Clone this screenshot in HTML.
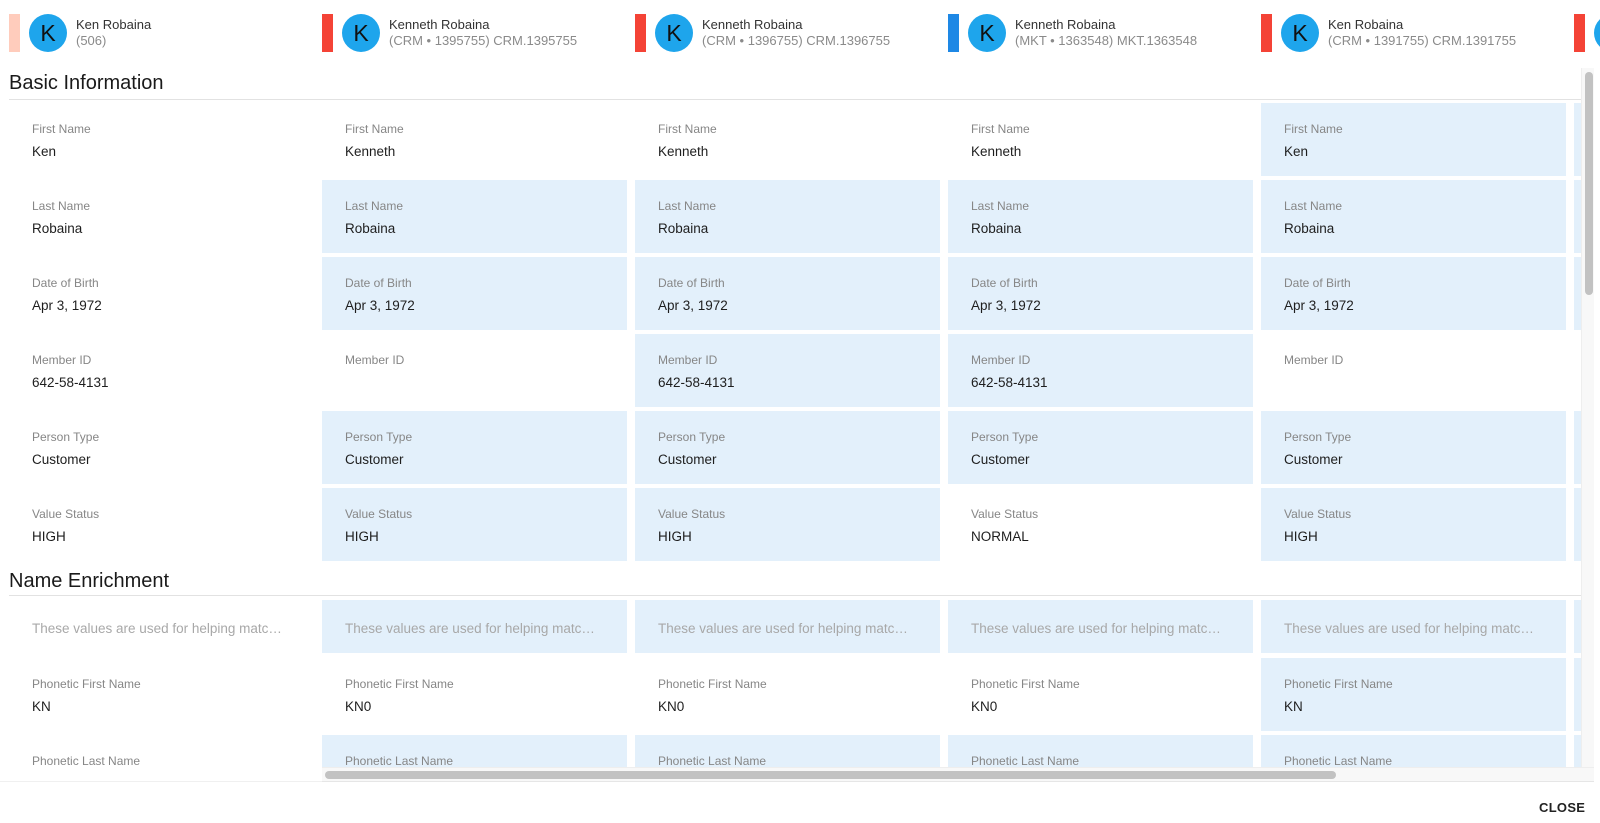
<!DOCTYPE html>
<html><head><meta charset="utf-8"><style>
*{margin:0;padding:0;box-sizing:border-box}
body{width:1600px;height:823px;background:#fff;font-family:"Liberation Sans",Arial,sans-serif;position:relative;overflow:hidden;color:#212121}
.a{position:absolute}
.bar{position:absolute;top:14px;width:11px;height:38px}
.av{position:absolute;top:14px;width:38px;height:38px;border-radius:50%;background:#1ea5ec;color:#111;font-size:23px;line-height:38px;text-align:center}
.nm{position:absolute;top:17px;font-size:13px;line-height:16px;color:#333;white-space:nowrap}
.sb{position:absolute;top:33px;font-size:13px;line-height:16px;color:#8a8a8a;white-space:nowrap}
.clip{position:absolute;left:0;top:62px;width:1581px;height:705px;overflow:hidden}
.in{position:absolute;left:0;top:-62px;width:1600px;height:823px}
.h{position:absolute;left:9px;font-size:20px;color:#1a1a1a;line-height:22px}
.ln{position:absolute;left:9px;width:1580px;height:1px;background:#e2e2e2}
.c{position:absolute;width:305px;height:73px}
.hl{background:#e3f0fb}
.c .l{position:absolute;left:23px;top:19px;font-size:12px;color:#868686;line-height:15px;white-space:nowrap}
.c .v{position:absolute;left:23px;top:40px;font-size:13.5px;color:#1e1e1e;line-height:18px;white-space:nowrap}
.d{position:absolute;width:305px;height:53px}
.d span{position:absolute;left:23px;top:20px;font-size:13.5px;color:#a8a8a8;line-height:18px;white-space:nowrap}
</style></head><body>

<div class="bar" style="left:9px;background:#ffccbc"></div><div class="av" style="left:29px">K</div><div class="nm" style="left:76px">Ken Robaina</div><div class="sb" style="left:76px">(506)</div>
<div class="bar" style="left:322px;background:#f44336"></div><div class="av" style="left:342px">K</div><div class="nm" style="left:389px">Kenneth Robaina</div><div class="sb" style="left:389px">(CRM • 1395755) CRM.1395755</div>
<div class="bar" style="left:635px;background:#f44336"></div><div class="av" style="left:655px">K</div><div class="nm" style="left:702px">Kenneth Robaina</div><div class="sb" style="left:702px">(CRM • 1396755) CRM.1396755</div>
<div class="bar" style="left:948px;background:#1e88e5"></div><div class="av" style="left:968px">K</div><div class="nm" style="left:1015px">Kenneth Robaina</div><div class="sb" style="left:1015px">(MKT • 1363548) MKT.1363548</div>
<div class="bar" style="left:1261px;background:#f44336"></div><div class="av" style="left:1281px">K</div><div class="nm" style="left:1328px">Ken Robaina</div><div class="sb" style="left:1328px">(CRM • 1391755) CRM.1391755</div>
<div class="bar" style="left:1574px;background:#f44336"></div><div class="av" style="left:1594px">K</div>

<div class="clip"><div class="in">
<div class="h" style="top:72px">Basic Information</div><div class="ln" style="top:99px"></div>

<div class="c" style="left:9px;top:103px"><div class="l">First Name</div><div class="v">Ken</div></div>
<div class="c" style="left:322px;top:103px"><div class="l">First Name</div><div class="v">Kenneth</div></div>
<div class="c" style="left:635px;top:103px"><div class="l">First Name</div><div class="v">Kenneth</div></div>
<div class="c" style="left:948px;top:103px"><div class="l">First Name</div><div class="v">Kenneth</div></div>
<div class="c hl" style="left:1261px;top:103px"><div class="l">First Name</div><div class="v">Ken</div></div>
<div class="c hl" style="left:1574px;top:103px"></div>

<div class="c" style="left:9px;top:180px"><div class="l">Last Name</div><div class="v">Robaina</div></div>
<div class="c hl" style="left:322px;top:180px"><div class="l">Last Name</div><div class="v">Robaina</div></div>
<div class="c hl" style="left:635px;top:180px"><div class="l">Last Name</div><div class="v">Robaina</div></div>
<div class="c hl" style="left:948px;top:180px"><div class="l">Last Name</div><div class="v">Robaina</div></div>
<div class="c hl" style="left:1261px;top:180px"><div class="l">Last Name</div><div class="v">Robaina</div></div>
<div class="c hl" style="left:1574px;top:180px"></div>

<div class="c" style="left:9px;top:257px"><div class="l">Date of Birth</div><div class="v">Apr 3, 1972</div></div>
<div class="c hl" style="left:322px;top:257px"><div class="l">Date of Birth</div><div class="v">Apr 3, 1972</div></div>
<div class="c hl" style="left:635px;top:257px"><div class="l">Date of Birth</div><div class="v">Apr 3, 1972</div></div>
<div class="c hl" style="left:948px;top:257px"><div class="l">Date of Birth</div><div class="v">Apr 3, 1972</div></div>
<div class="c hl" style="left:1261px;top:257px"><div class="l">Date of Birth</div><div class="v">Apr 3, 1972</div></div>
<div class="c hl" style="left:1574px;top:257px"></div>

<div class="c" style="left:9px;top:334px"><div class="l">Member ID</div><div class="v">642-58-4131</div></div>
<div class="c" style="left:322px;top:334px"><div class="l">Member ID</div></div>
<div class="c hl" style="left:635px;top:334px"><div class="l">Member ID</div><div class="v">642-58-4131</div></div>
<div class="c hl" style="left:948px;top:334px"><div class="l">Member ID</div><div class="v">642-58-4131</div></div>
<div class="c" style="left:1261px;top:334px"><div class="l">Member ID</div></div>

<div class="c" style="left:9px;top:411px"><div class="l">Person Type</div><div class="v">Customer</div></div>
<div class="c hl" style="left:322px;top:411px"><div class="l">Person Type</div><div class="v">Customer</div></div>
<div class="c hl" style="left:635px;top:411px"><div class="l">Person Type</div><div class="v">Customer</div></div>
<div class="c hl" style="left:948px;top:411px"><div class="l">Person Type</div><div class="v">Customer</div></div>
<div class="c hl" style="left:1261px;top:411px"><div class="l">Person Type</div><div class="v">Customer</div></div>
<div class="c hl" style="left:1574px;top:411px"></div>

<div class="c" style="left:9px;top:488px"><div class="l">Value Status</div><div class="v">HIGH</div></div>
<div class="c hl" style="left:322px;top:488px"><div class="l">Value Status</div><div class="v">HIGH</div></div>
<div class="c hl" style="left:635px;top:488px"><div class="l">Value Status</div><div class="v">HIGH</div></div>
<div class="c" style="left:948px;top:488px"><div class="l">Value Status</div><div class="v">NORMAL</div></div>
<div class="c hl" style="left:1261px;top:488px"><div class="l">Value Status</div><div class="v">HIGH</div></div>
<div class="c hl" style="left:1574px;top:488px"></div>

<div class="h" style="top:570px">Name Enrichment</div><div class="ln" style="top:595px"></div>

<div class="d" style="left:9px;top:600px"><span>These values are used for helping matc…</span></div>
<div class="d hl" style="left:322px;top:600px"><span>These values are used for helping matc…</span></div>
<div class="d hl" style="left:635px;top:600px"><span>These values are used for helping matc…</span></div>
<div class="d hl" style="left:948px;top:600px"><span>These values are used for helping matc…</span></div>
<div class="d hl" style="left:1261px;top:600px"><span>These values are used for helping matc…</span></div>
<div class="d hl" style="left:1574px;top:600px"></div>

<div class="c" style="left:9px;top:658px"><div class="l">Phonetic First Name</div><div class="v">KN</div></div>
<div class="c" style="left:322px;top:658px"><div class="l">Phonetic First Name</div><div class="v">KN0</div></div>
<div class="c" style="left:635px;top:658px"><div class="l">Phonetic First Name</div><div class="v">KN0</div></div>
<div class="c" style="left:948px;top:658px"><div class="l">Phonetic First Name</div><div class="v">KN0</div></div>
<div class="c hl" style="left:1261px;top:658px"><div class="l">Phonetic First Name</div><div class="v">KN</div></div>
<div class="c hl" style="left:1574px;top:658px"></div>

<div class="c" style="left:9px;top:735px"><div class="l">Phonetic Last Name</div></div>
<div class="c hl" style="left:322px;top:735px"><div class="l">Phonetic Last Name</div></div>
<div class="c hl" style="left:635px;top:735px"><div class="l">Phonetic Last Name</div></div>
<div class="c hl" style="left:948px;top:735px"><div class="l">Phonetic Last Name</div></div>
<div class="c hl" style="left:1261px;top:735px"><div class="l">Phonetic Last Name</div></div>
<div class="c hl" style="left:1574px;top:735px"></div>
</div></div>

<div class="a" style="left:1581px;top:68px;width:13px;height:714px;background:#f8f8f8;border-left:1px solid #eee"></div>
<div class="a" style="left:1585px;top:72px;width:8px;height:223px;border-radius:4px;background:#c2c2c2"></div>
<div class="a" style="left:322px;top:767px;width:1272px;height:15px;background:#f8f8f8;border-top:1px solid #eee;border-bottom:1px solid #e6e6e6"></div>
<div class="a" style="left:0;top:781px;width:322px;height:1px;background:#f0f0f0"></div>
<div class="a" style="left:325px;top:771px;width:1011px;height:8px;border-radius:4px;background:#c2c2c2"></div>

<div class="a" style="left:1539px;top:801px;font-size:13px;font-weight:bold;color:#222;letter-spacing:0.3px;line-height:14px">CLOSE</div>
</body></html>
